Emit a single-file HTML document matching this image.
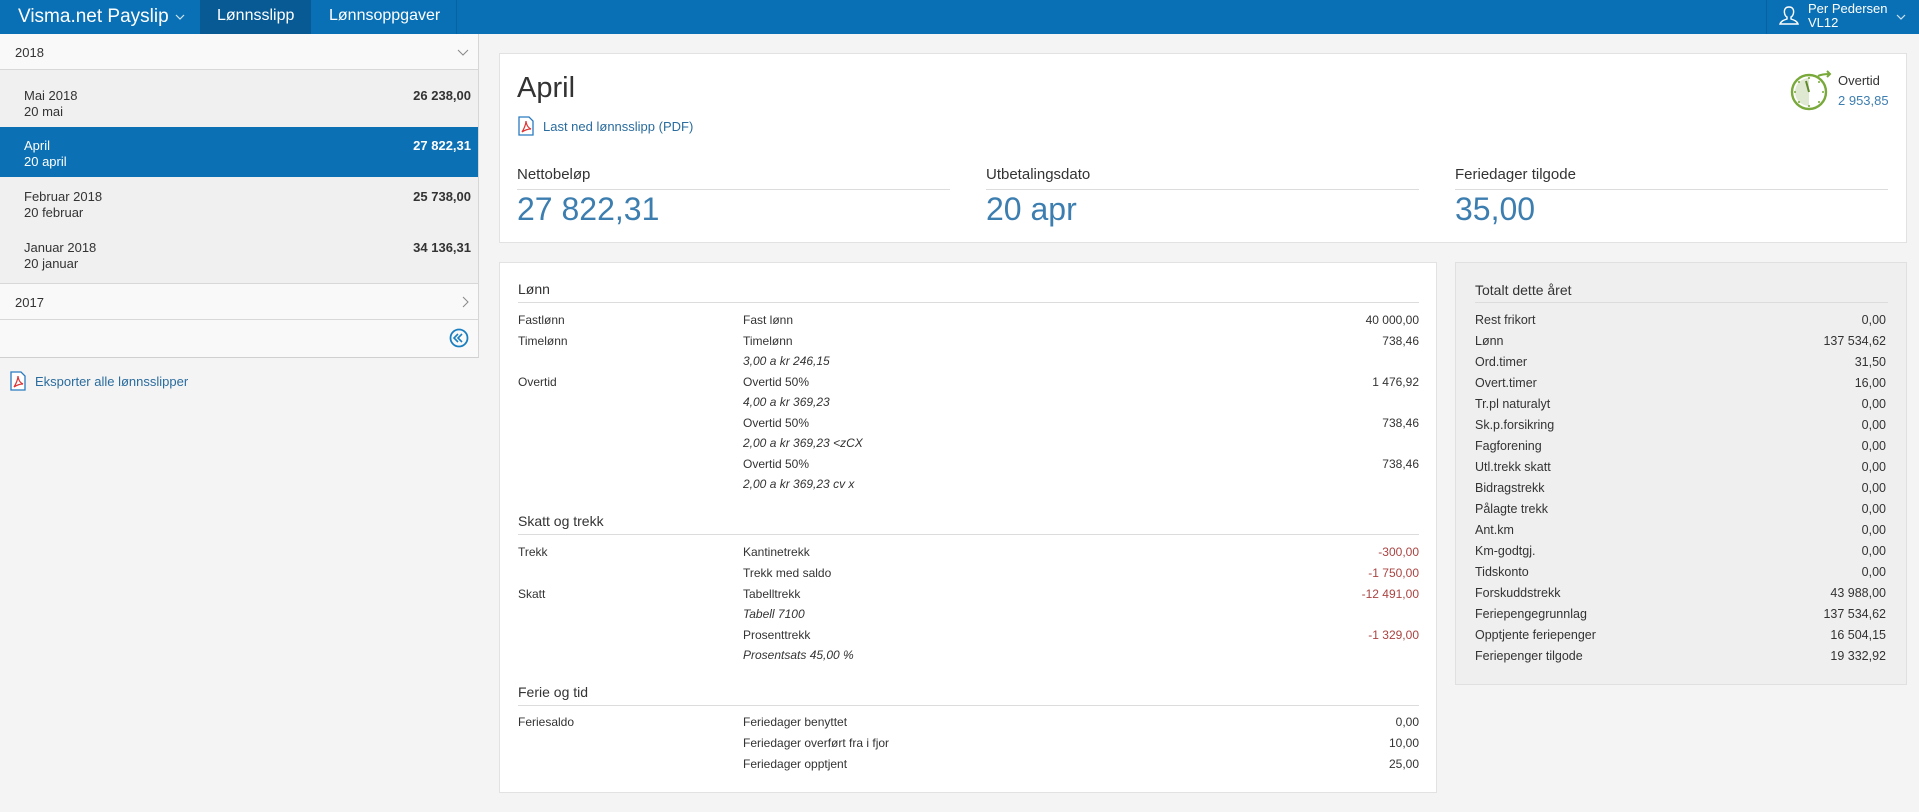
<!DOCTYPE html>
<html><head><meta charset="utf-8"><style>
*{box-sizing:border-box;margin:0;padding:0}
body{width:1919px;height:812px;overflow:hidden;background:#f4f4f4;font-family:"Liberation Sans",sans-serif;color:#333;position:relative;font-size:13px}
.a{position:absolute;white-space:nowrap}
.hdr{position:absolute;left:0;top:0;width:1919px;height:34px;background:#0a70b5}
.r{text-align:right}
.blue{color:#3d7eb0}
.red{color:#a94442}
.i{font-style:italic}
.ln{position:absolute;height:1px;background:#dcdcdc}
a{color:#2a6c9e}
</style></head><body>
<div class="hdr"></div>
<div class="a" style="left:18px;top:6px;font-size:19px;color:#fff">Visma.net Payslip</div>
<svg class="a" style="left:175px;top:13px" width="10" height="8"><path d="M1 2l4 4 4-4" stroke="#cfe3f2" fill="none" stroke-width="1.2"/></svg>
<div class="a" style="left:200px;top:0;width:111px;height:34px;background:#075a94"></div>
<div class="a" style="left:217px;top:7px;font-size:16px;color:#fff">Lønnsslipp</div>
<div class="a" style="left:311px;top:0;width:146px;height:34px;border-right:1px solid #0862a0"></div>
<div class="a" style="left:329px;top:7px;font-size:16px;color:#fff">Lønnsoppgaver</div>
<div class="a" style="left:1766px;top:0;width:1px;height:34px;background:#0862a0"></div>
<svg class="a" style="left:1778px;top:5px" width="22" height="22" viewBox="0 0 22 22"><path d="M11 2c-4 0-5 3-4.5 6 .3 2 1.5 3.5 2.5 4v2c-3 1-6 2-7 5h18c-1-3-4-4-7-5v-2c1-.5 2.2-2 2.5-4 .5-3-.5-6-4.5-6z" fill="none" stroke="#fff" stroke-width="1.4"/></svg>
<div class="a" style="left:1808px;top:2px;font-size:13px;color:#fff;line-height:14px">Per Pedersen<br>VL12</div>
<svg class="a" style="left:1896px;top:13px" width="10" height="8"><path d="M1 2l4 4 4-4" stroke="#cfe3f2" fill="none" stroke-width="1.2"/></svg>

<!-- sidebar -->
<div class="a" style="left:0;top:34px;width:479px;height:324px;background:#f0f0f0;border-right:1px solid #d6d6d6;border-bottom:1px solid #d0d0d0"></div>
<div class="a" style="left:0;top:34px;width:478px;height:36px;background:#f9f9f9;border-bottom:1px solid #d8d8d8"></div>
<div class="a" style="left:15px;top:45px">2018</div>
<svg class="a" style="left:457px;top:49px" width="12" height="8"><path d="M1 1l5 5 5-5" stroke="#888" fill="none"/></svg>
<div class="a" style="left:24px;top:88px;line-height:16px">Mai 2018<br>20 mai</div>
<div class="a r" style="left:380px;width:91px;top:88px;font-weight:bold">26 238,00</div>
<div class="a" style="left:0;top:127px;width:478px;height:50px;background:#0b70b4"></div>
<div class="a" style="left:24px;top:138px;line-height:16px;color:#fff">April<br>20 april</div>
<div class="a r" style="left:380px;width:91px;top:138px;font-weight:bold;color:#fff">27 822,31</div>
<div class="a" style="left:24px;top:189px;line-height:16px">Februar 2018<br>20 februar</div>
<div class="a r" style="left:380px;width:91px;top:189px;font-weight:bold">25 738,00</div>
<div class="a" style="left:24px;top:240px;line-height:16px">Januar 2018<br>20 januar</div>
<div class="a r" style="left:380px;width:91px;top:240px;font-weight:bold">34 136,31</div>
<div class="a" style="left:0;top:283px;width:478px;height:37px;background:#f9f9f9;border-top:1px solid #d8d8d8;border-bottom:1px solid #d8d8d8"></div>
<div class="a" style="left:15px;top:295px">2017</div>
<svg class="a" style="left:462px;top:296px" width="8" height="12"><path d="M1 1l5 5-5 5" stroke="#888" fill="none"/></svg>
<div class="a" style="left:0;top:320px;width:478px;height:37px;background:#f9f9f9"></div>
<svg class="a" style="left:449px;top:328px" width="20" height="20"><circle cx="10" cy="10" r="8.5" fill="none" stroke="#1a7fc0" stroke-width="1.8"/><path d="M9 6l-4 4 4 4M13 6l-4 4 4 4" stroke="#1a7fc0" fill="none" stroke-width="1.6"/></svg>
<svg class="a" style="left:10px;top:371px" width="16" height="20"><path d="M1 1h10l4 4v14H1z" fill="#fff" stroke="#2a7ac0" stroke-width="1.3"/><path d="M4 16c2-3 4-8 4-11 0 3 2 7 5 8-3 0-6 1-9 3z" fill="none" stroke="#d33" stroke-width="1.2"/></svg>
<div class="a" style="left:35px;top:374px"><a>Eksporter alle lønnsslipper</a></div>

<!-- top card -->
<div class="a" style="left:499px;top:53px;width:1408px;height:190px;background:#fff;border:1px solid #e2e2e2"></div>
<div class="a" style="left:517px;top:72px;font-size:29px;color:#333">April</div>
<svg class="a" style="left:518px;top:116px" width="16" height="20"><path d="M1 1h10l4 4v14H1z" fill="#fff" stroke="#2a7ac0" stroke-width="1.3"/><path d="M4 16c2-3 4-8 4-11 0 3 2 7 5 8-3 0-6 1-9 3z" fill="none" stroke="#d33" stroke-width="1.2"/></svg>
<div class="a" style="left:543px;top:119px"><a>Last ned lønnsslipp (PDF)</a></div>
<svg class="a" style="left:1790px;top:68px" width="44" height="44" viewBox="0 0 44 44"><circle cx="19" cy="24" r="17" fill="#fff" stroke="#79a93a" stroke-width="2.4"/><path d="M19 24V10A14 14 0 0 0 19 38z" fill="#dfe8d0"/><g fill="#79a93a"><circle cx="19" cy="10" r="1"/><circle cx="33" cy="24" r="1"/><circle cx="19" cy="38" r="1"/><circle cx="5" cy="24" r="1"/><circle cx="29" cy="14" r="1"/><circle cx="29" cy="34" r="1"/><circle cx="9" cy="34" r="1"/><circle cx="9" cy="14" r="1"/></g><path d="M19 24l-3-11" stroke="#5f8a2a" stroke-width="2"/><path d="M28 8c4-2 8-2 12-2M37 3l3 3-3 3" stroke="#79a93a" fill="none" stroke-width="2"/></svg>
<div class="a" style="left:1838px;top:71px;line-height:20px">Overtid<br><span class="blue">2 953,85</span></div>
<div class="a" style="left:517px;top:166px;font-size:15px">Nettobeløp</div>
<div class="ln" style="left:517px;top:189px;width:433px"></div>
<div class="a blue" style="left:517px;top:191px;font-size:32px">27 822,31</div>
<div class="a" style="left:986px;top:166px;font-size:15px">Utbetalingsdato</div>
<div class="ln" style="left:986px;top:189px;width:433px"></div>
<div class="a blue" style="left:986px;top:191px;font-size:32px">20 apr</div>
<div class="a" style="left:1455px;top:166px;font-size:15px">Feriedager tilgode</div>
<div class="ln" style="left:1455px;top:189px;width:433px"></div>
<div class="a blue" style="left:1455px;top:191px;font-size:32px">35,00</div>

<!-- details -->
<div class="a" style="left:499px;top:262px;width:938px;height:531px;background:#fff;border:1px solid #e2e2e2"></div>
<div id="d" style="position:absolute;left:518px;top:0;width:901px;font-size:12px"></div>
<!-- totals -->
<div class="a" style="left:1455px;top:262px;width:452px;height:423px;background:#efefef;border:1px solid #e0e0e0"></div>
<div id="t" style="position:absolute;left:1475px;top:0;width:411px;font-size:12.5px"></div>
<script>
var d=document.getElementById('d'),h='';
function sec(y,txt){h+='<div class="a" style="left:0;top:'+(y-9)+'px;font-size:14px">'+txt+'</div><div class="ln" style="left:0;top:'+(y+12)+'px;width:901px"></div>';}
function row(y,a,b,c,cls){h+='<div class="a" style="left:0;top:'+(y-7)+'px">'+a+'</div><div class="a'+(cls&&cls=='i'?' i':'')+'" style="left:225px;top:'+(y-7)+'px">'+b+'</div><div class="a r '+(cls||'')+'" style="right:0;top:'+(y-7)+'px">'+c+'</div>';}
sec(290,'Lønn');
row(320,'Fastlønn','Fast lønn','40 000,00');
row(341,'Timelønn','Timelønn','738,46');
row(361,'','3,00 a kr 246,15','','i');
row(382,'Overtid','Overtid 50%','1 476,92');
row(402,'','4,00 a kr 369,23','','i');
row(423,'','Overtid 50%','738,46');
row(443,'','2,00 a kr 369,23 &lt;zCX','','i');
row(464,'','Overtid 50%','738,46');
row(484,'','2,00 a kr 369,23 cv x','','i');
sec(522,'Skatt og trekk');
row(552,'Trekk','Kantinetrekk','-300,00','red');
row(573,'','Trekk med saldo','-1 750,00','red');
row(594,'Skatt','Tabelltrekk','-12 491,00','red');
row(614,'','Tabell 7100','','i');
row(635,'','Prosenttrekk','-1 329,00','red');
row(655,'','Prosentsats 45,00 %','','i');
sec(693,'Ferie og tid');
row(722,'Feriesaldo','Feriedager benyttet','0,00');
row(743,'','Feriedager overført fra i fjor','10,00');
row(764,'','Feriedager opptjent','25,00');
d.innerHTML=h;
var t=document.getElementById('t');h='';
h+='<div class="a" style="left:0;top:282px;font-size:14px">Totalt dette året</div><div class="ln" style="left:0;top:302px;width:413px"></div>';
var L=[['Rest frikort','0,00'],['Lønn','137 534,62'],['Ord.timer','31,50'],['Overt.timer','16,00'],['Tr.pl naturalyt','0,00'],['Sk.p.forsikring','0,00'],['Fagforening','0,00'],['Utl.trekk skatt','0,00'],['Bidragstrekk','0,00'],['Pålagte trekk','0,00'],['Ant.km','0,00'],['Km-godtgj.','0,00'],['Tidskonto','0,00'],['Forskuddstrekk','43 988,00'],['Feriepengegrunnlag','137 534,62'],['Opptjente feriepenger','16 504,15'],['Feriepenger tilgode','19 332,92']];
L.forEach(function(r,i){var y=313+i*21;h+='<div class="a" style="left:0;top:'+y+'px">'+r[0]+'</div><div class="a r" style="right:0;top:'+y+'px">'+r[1]+'</div>';});
t.innerHTML=h;
</script>
</body></html>
